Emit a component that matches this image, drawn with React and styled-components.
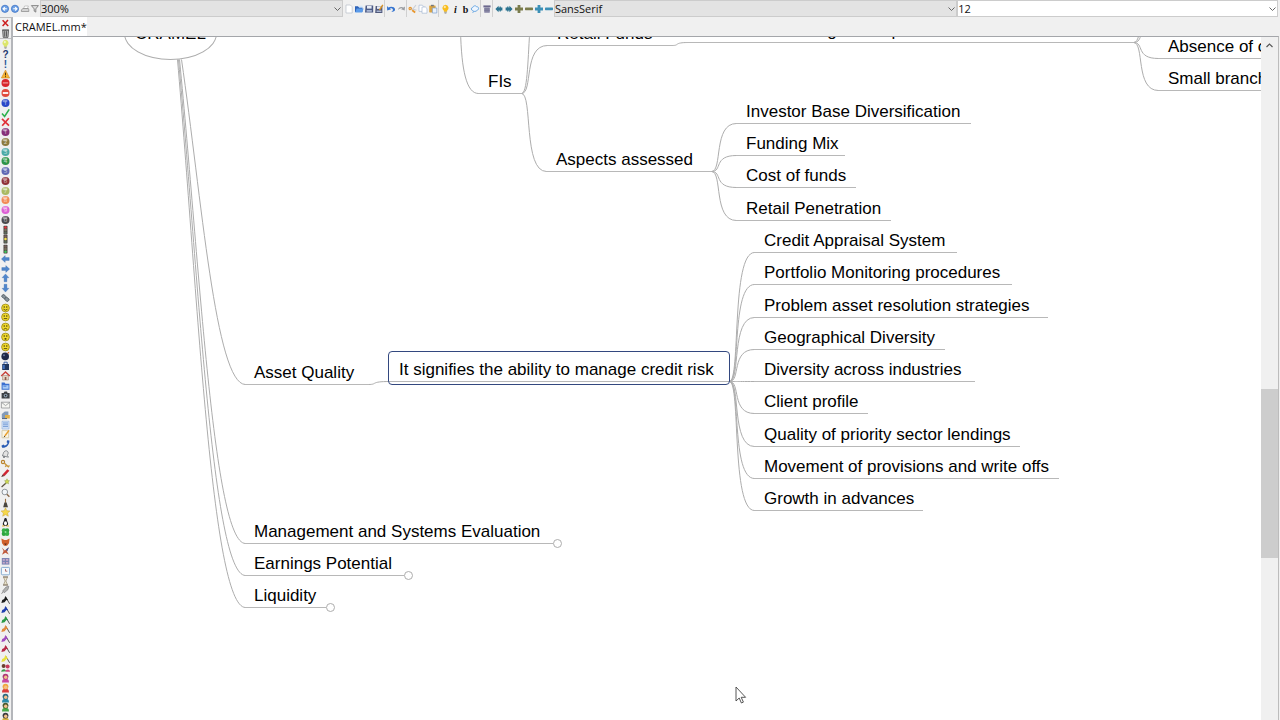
import React, { useState } from 'react';
import styled, { createGlobalStyle, css } from 'styled-components';

const GlobalStyle = createGlobalStyle`
  * {
    box-sizing: border-box;
  }

  body {
    margin: 0;
    background: #f0f0f0;
    color: #111;
    font-family: 'Open Sans', 'Noto Sans', sans-serif;
    font-size: 11px;
  }

  button,
  select {
    margin: 0;
    padding: 0;
    border: 0;
    background: none;
    color: inherit;
    font: inherit;
  }
`;

const Window = styled.div`
  display: flex;
  flex-direction: column;
  height: 100vh;
  overflow: hidden;
`;

const Toolbar = styled.header`
  display: flex;
  flex: none;
  height: 17px;
  padding-right: 2px;
`;

const ToolGroup = styled.div`
  display: flex;
  flex: none;
  align-items: center;

  & + & {
    padding-left: 1px;
    border-left: 1px solid #d0d0d0;
  }
`;

const Tools = styled.div`
  display: flex;
  flex: none;
  padding-left: ${({ $indent }) => ($indent ? '1px' : '0')};
`;

const iconSize = css`
  svg {
    display: block;
    width: 10px;
    height: 10px;
  }
`;

const ToolButton = styled.button`
  width: 10px;
  height: 10px;
  ${iconSize}
`;

const Combo = styled.label`
  position: relative;
  display: flex;
  flex: ${({ $grow }) => $grow} 1 0;
  min-width: 0;
  border: 1px solid #cccccc;
  background: ${({ $light }) => ($light ? '#ffffff' : '#e3e3e3')};

  select {
    width: 100%;
    appearance: none;
    line-height: 15px;
    outline: none;
  }

  svg {
    position: absolute;
    top: 5px;
    right: 1px;
    width: 7px;
    height: 6px;
    pointer-events: none;
  }
`;

const Body = styled.div`
  display: flex;
  flex: 1;
  min-height: 0;
`;

const IconBar = styled.aside`
  flex: none;
  width: 13px;
  overflow: hidden;
  border-top: 1px solid #c0c0c0;
  border-right: 2px solid #b4b6ba;
`;

const IconColumn = styled.div`
  display: flex;
  flex-direction: column;

  & + & {
    border-top: 1px solid #c0c0c0;
  }
`;

const IconButton = styled.button`
  flex: none;
  width: 11px;
  height: 10px;
  ${iconSize}

  &:nth-child(4n) {
    height: 9px;
  }
`;

const Main = styled.main`
  display: flex;
  flex: 1;
  flex-direction: column;
  min-width: 0;
`;

const TabStrip = styled.nav`
  display: flex;
  flex: none;
  height: 19px;
`;

const Tab = styled.button`
  padding: 0 0 0 2px;
  background: #ffffff;
  line-height: 18px;
`;

const Frame = styled.div`
  display: flex;
  flex: 1;
  min-height: 0;
  margin-right: 1px;
  border-top: 1px solid #a4a6aa;
  border-right: 1px solid #bcbcbc;
`;

const Canvas = styled.section`
  position: relative;
  flex: 1;
  overflow: hidden;
  background: #ffffff;
  color: #000;
  font-family: 'Liberation Sans', Arial, sans-serif;
  font-size: 17px;
`;

const Edges = styled.svg`
  position: absolute;
  inset: 0;
  width: 100%;
  height: 100%;
  fill: none;
  stroke: #adadad;
  stroke-width: 1;
`;

const Node = styled.div`
  position: absolute;
  left: ${({ $x }) => $x}px;
  top: ${({ $y }) => $y - 22}px;
  width: ${({ $w }) => $w}px;
  height: 23px;
  padding-left: 10px;
  border-bottom: 1px solid #b8b8b8;
  line-height: 22px;
  white-space: nowrap;
`;

const Selection = styled.div`
  position: absolute;
  left: ${({ $x }) => $x}px;
  top: ${({ $y }) => $y - 30}px;
  width: ${({ $w }) => $w}px;
  height: 34px;
  border: 1px solid #33487f;
  border-radius: 4px;
`;

const RootNode = styled.div`
  position: absolute;
  left: ${({ $x }) => $x}px;
  top: ${({ $y }) => $y}px;
  width: 93px;
  height: 53px;
  border: 1px solid #adadad;
  border-radius: 50%;
  line-height: 51px;
  text-align: center;
`;

const Pointer = styled.svg`
  position: absolute;
  left: ${({ $x }) => $x}px;
  top: ${({ $y }) => $y}px;
  width: 12px;
  height: 18px;
`;

const ScrollBar = styled.div`
  display: flex;
  flex: none;
  flex-direction: column;
  width: 17px;
  background: #f0f0f0;
`;

const ScrollButton = styled.button`
  display: flex;
  flex: none;
  align-items: center;
  justify-content: center;
  height: 17px;
`;

const Track = styled.div`
  display: flex;
  flex: 1;
  flex-direction: column;
`;

const TrackSpace = styled.div`
  flex: ${({ $grow }) => $grow};
`;

const Thumb = styled.div`
  flex: 169;
  background: #cdcdcd;
`;

/* ---------- icons, all on a 10 x 10 grid ---------- */

const Svg = ({ children }) => (
  <svg viewBox="0 0 10 10" aria-hidden="true">
    {children}
  </svg>
);

const Ball = ({ color, mark }) => (
  <Svg>
    <circle cx="5.5" cy="5" r="4" fill={color} />
    <ellipse cx="5" cy="3" rx="2.6" ry="1.4" fill="#fff" opacity="0.4" />
    <text x="5.5" y="7" fontSize="6" textAnchor="middle" fill="#fff" opacity="0.7">
      {mark}
    </text>
  </Svg>
);

const Mark = ({ color, mark, serif, italic, size = 10 }) => (
  <Svg>
    <text
      x="5.5"
      y="8.5"
      fontSize={size}
      fontWeight="700"
      fontStyle={italic ? 'italic' : 'normal'}
      fontFamily={serif ? 'Liberation Serif, serif' : 'Liberation Sans, sans-serif'}
      textAnchor="middle"
      fill={color}
    >
      {mark}
    </text>
  </Svg>
);

const Flag = ({ color }) => (
  <Svg>
    <path d="M5.800 2.200l3.800 6.600" stroke="#555" strokeWidth="1" />
    <path d="M5.400 1L8.200 5.200 6.400 5 4.600 7.200 1.400 8l.8-3L4.200 4z" fill={color} />
  </Svg>
);

const Person = ({ color, hair }) => (
  <Svg>
    <path d="M2 9.6c0-3 1.5-4 3.5-4S9 6.600 9 9.6z" fill={color} />
    <circle cx="5.5" cy="3.6" r="2.9" fill={hair} />
    <circle cx="5.7" cy="4.3" r="1.7" fill="#f2c08a" />
  </Svg>
);

const Light = ({ red, yellow, green }) => (
  <Svg>
    <rect x="3.500" y="0.800" width="4" height="8.600" rx="0.6" fill="#4a4440" />
    <circle cx="5.5" cy="2.5" r="1.3" fill={red || '#77605a'} />
    <circle cx="5.5" cy="5.1" r="1.3" fill={yellow || '#77705a'} />
    <circle cx="5.5" cy="7.7" r="1.3" fill={green || '#5a6a5a'} />
  </Svg>
);

const Arrow = ({ turn = 0, color = '#4f86cc' }) => (
  <Svg>
    <path
      d="M1.4 5l3.800-3.400v2h4v2.800h-4v2z"
      fill={color}
      stroke="#2f62a8"
      strokeWidth="0.3"
      transform={`rotate(${turn} 5.500 5)`}
    />
  </Svg>
);

const Face = ({ mouth }) => (
  <Svg>
    <circle cx="5.5" cy="5" r="3.900" fill="#f0d92c" stroke="#8a7a14" strokeWidth="0.7" />
    <circle cx="4.200" cy="4" r="0.7" fill="#3a3208" />
    <circle cx="6.800" cy="4" r="0.7" fill="#3a3208" />
    <path d={mouth} fill="none" stroke="#3a3208" strokeWidth="0.8" />
  </Svg>
);

const Disc = ({ children }) => (
  <Svg>
    <circle cx="5" cy="4.800" r="3.600" fill="#6fa2e6" stroke="#3f72c4" strokeWidth="0.8" />
    {children}
  </Svg>
);

const Bulb = ({ color }) => (
  <Svg>
    <path d="M5.500 0.800a3.200 3.200 0 0 0-1.600 5.900v1h3.200v-1A3.200 3.200 0 0 0 5.500.800z" fill={color} />
    <ellipse cx="4.800" cy="3" rx="1.100" ry="1.300" fill="#fff" opacity="0.6" />
    <path d="M4.200 8.200h2.600M4.600 9.200h1.800" stroke="#8a8a80" strokeWidth="0.8" />
  </Svg>
);

const Sign = ({ kind, color }) => (
  <Svg>
    {kind === 'plus' && <path d="M3.600 1h2.800v2.600H9v2.800H6.400V9H3.600V6.400H1V3.600h2.600z" fill={color} />}
    {kind === 'minus' && <rect x="1" y="3.600" width="8" height="2.600" rx="0.6" fill={color} />}
    {kind === 'left' && <path d="M1.400 5l3.200-3.200v1.800h1V2.600h1.200v1H8.400v2.800H6.800v1H5.600v-1h-1v1.800z" fill={color} />}
    {kind === 'right' && <path d="M8.600 5L5.400 1.800v1.800h-1V2.600H3.200v1H1.600v2.800h1.600v1h1.200v-1h1v1.800z" fill={color} />}
  </Svg>
);

const navTools = [
  ['Back', <Disc><path d="M6.800 4.800H3.200M4.800 3.100L3.100 4.800l1.700 1.700" fill="none" stroke="#fff" strokeWidth="1.100" /></Disc>],
  ['Forward', <Disc><path d="M3.200 4.800h3.600M5.200 3.100l1.700 1.700-1.700 1.700" fill="none" stroke="#fff" strokeWidth="1.100" /></Disc>],
  ['Print', <Svg><path d="M3.500 4.800L4.600 2h3.800L7.300 4.800z" fill="#fff" stroke="#999" strokeWidth="0.5" /><path d="M1.400 5.800l1.600-1.300h5.400l.4 1.300v1.700H1.400z" fill="#d4d4d4" stroke="#777" strokeWidth="0.6" /></Svg>],
  ['Filter', <Svg><path d="M1.400 1.600h7L5.800 4.900v3.200l-1.600-1V4.900z" fill="#e0e0e0" stroke="#707070" strokeWidth="0.8" /></Svg>],
];

const page = (x, y) => (
  <path d={`M${x} ${y}h3.400l1.600 1.600v4.600h-5z`} fill="#fff" stroke="#9ab0cc" strokeWidth="0.6" />
);

const editTools = [
  [
    ['New', <Svg><path d="M2 1h4.400l1.800 1.800V9H2z" fill="#fff" stroke="#b8bec8" strokeWidth="0.7" /></Svg>],
    ['Open', <Svg><path d="M1 2.200h3l.8 1h3.600V8H1z" fill="#2d62b8" /><path d="M2.600 4.600h7L8.200 8.600H1.200z" fill="#5b9bea" /><path d="M5 1.600h3.600v2H5z" fill="#d6e8fb" /></Svg>],
    ['Save', <Svg><path d="M1.600 1.600h7.600v7H1z" fill="#4c5a86" /><path d="M3 1.900h4.600v2.700H3z" fill="#e6ebf5" /><path d="M2.600 6h5.200v1.800H2.600z" fill="#a9b6d2" /></Svg>],
    ['Save as', <Svg><path d="M1.600 2h6.800v7H1.200z" fill="#51597c" /><path d="M3 2.300h4v2.600H3z" fill="#e6ebf5" /><path d="M2.600 6.500h4.800V8H2.600z" fill="#a9b6d2" /><path d="M8.800.8L5.400 6.200" stroke="#d99325" strokeWidth="1.400" /></Svg>],
  ],
  [
    ['Undo', <Svg><path d="M1 2l.2 4.400 4-1.200-1.300-.8c1.400-.4 2.600.2 3 1.200C7.200 6.600 6.400 7.400 5 7.600c2.400.6 4.400-.6 4-2.600C8.500 2.700 5 1.900 2.400 3.400z" fill="#3574d0" /></Svg>],
    ['Redo', <Svg><path d="M9 2.400l-.3 4-3.600-1.200 1.200-.7c-1.600-.6-3 .3-4.100 1.600C2 3.500 5 2.300 7.600 3.600z" fill="#9a9da2" /></Svg>],
  ],
  [
    ['Cut', <Svg><path d="M8 1L3.800 6.400M2 4.400l6.600 1.800" stroke="#c9ced6" strokeWidth="1.100" /><circle cx="2.200" cy="4.600" r="1.200" fill="none" stroke="#e8962c" strokeWidth="1.100" /><path d="M4.200 6.200l3 2.200" stroke="#e8962c" strokeWidth="1.800" /></Svg>],
    ['Copy', <Svg>{page(1, 1.2)}{page(4, 3)}</Svg>],
    ['Paste', <Svg><rect x="1.200" y="1.400" width="6.400" height="7" rx="0.6" fill="#dba544" /><rect x="3" y="0.800" width="2.800" height="1.500" fill="#777" /><path d="M4.400 4h4.400v5H4.400z" fill="#e9f1fb" stroke="#6c93c9" strokeWidth="0.6" /></Svg>],
  ],
  [
    ['Idea', <Bulb color="#f9bd1c" />],
    ['Italic', <Mark mark="i" serif italic color="#111" size={10} />],
    ['Bold', <Mark mark="b" serif color="#111" size={10} />],
    ['Cloud', <Svg><path d="M2.800 6.600C.800 6.200.800 3.600 2.700 3.500 3.200 1.500 6 1.300 6.600 2.700c2.200-.3 2.800 3 .5 3.600C6.200 7.800 3.600 7.700 2.800 6.600z" fill="#eef6ff" stroke="#5fa0e0" strokeWidth="0.9" /><path d="M3.400 7.400l-.6 1.400" stroke="#5fa0e0" /></Svg>],
  ],
  [
    ['Attributes', <Svg><path d="M1.400 1.400h7.200v2H1.400z" fill="#6c688e" /><path d="M2 3.400h6v5.400H2z" fill="#a8a6bf" /><path d="M2 5h6M2 6.800h6M4 3.400v5.400M6 3.400v5.400" stroke="#5d5a80" strokeWidth="0.600" /></Svg>],
  ],
  [
    ['Move left', <Sign kind="left" color="#2b7390" />],
    ['Move right', <Sign kind="right" color="#2b7390" />],
    ['Unfold one level', <Sign kind="plus" color="#7a7c4c" />],
    ['Fold one level', <Sign kind="minus" color="#7a7c4c" />],
    ['Unfold all', <Sign kind="plus" color="#3b8fb6" />],
    ['Fold all', <Sign kind="minus" color="#3b8fb6" />],
  ],
];

const removeIcons = [
  ['Remove last icon', <Svg><path d="M2.600 2.200l5.600 5.800M8 2L2.600 8" stroke="#cc1f1f" strokeWidth="1.500" /></Svg>],
  ['Remove all icons', <Svg><path d="M2.600 2.200h6L8 9.400H3.200z" fill="#b4b4b4" stroke="#444" strokeWidth="0.7" /><path d="M2.200 2h6.800M4.700 3.200v5.400M6.500 3.200v5.400" stroke="#444" strokeWidth="0.8" /></Svg>],
];

const numberColors = [
  '#852f78', '#8b7a3c', '#4caaa6', '#2e9446', '#6069b4', '#8f3038', '#a9ba62', '#f28a55', '#dc5fd4', '#4a4a4c',
];

const smile = 'M3.500 6.200q2 2 4 0';
const frown = 'M3.600 7.300q1.900-1.800 3.800 0';
const flat = 'M3.800 6.600h3.400';
const gasp = 'M4.800 6.600h1.400v.6H4.800z';

const flagColors = ['#1c1c1c', '#1f3fb0', '#2a9a45', '#e08a3c', '#a04cc0', '#b82a48', '#e8e03a'];

const nodeIcons = [
  ['Idea', <Bulb color="#dce66a" />],
  ['Question', <Mark mark="?" color="#22386e" size={10} />],
  ['Important', <Mark mark="!" color="#2a5a9a" size={10} />],
  ['Warning', <Svg><path d="M5.500 1L9.600 9H1.400z" fill="#f8b430" stroke="#c9852a" strokeWidth="0.6" /><path d="M5.500 3.600v2.800M5.500 7.200v1" stroke="#4a3210" strokeWidth="1" /></Svg>],
  ['Stop', <Svg><circle cx="5.500" cy="5" r="4" fill="#d8262c" /><path d="M2.800 4.900h5.400" stroke="#f0a0a0" strokeWidth="1.200" /></Svg>],
  ['No entry', <Svg><circle cx="5.500" cy="5" r="4" fill="#e04a3c" /><path d="M2.800 5h5.400" stroke="#fff" strokeWidth="1.800" /></Svg>],
  ['Info', <Ball color="#2848c8" mark="i" />],
  ['OK', <Svg><path d="M2 5.400l2.600 3L9.200 1.400" fill="none" stroke="#2cb04c" strokeWidth="1.600" /></Svg>],
  ['Not OK', <Svg><path d="M2 1.800l7 6.800M8.800 1.200L2.200 8.800" stroke="#e03038" strokeWidth="1.700" /></Svg>],
  ...numberColors.map((color, i) => [`Priority ${i}`, <Ball color={color} mark={(i + 1) % 10} />]),
  ['Red light', <Light red="#e8323a" />],
  ['Yellow light', <Light yellow="#f4e04a" />],
  ['Green light', <Light green="#3cc45a" />],
  ['Arrow left', <Arrow />],
  ['Arrow right', <Arrow turn={180} />],
  ['Arrow up', <Arrow turn={90} />],
  ['Arrow down', <Arrow turn={270} />],
  ['Attachment', <Svg><rect x="1.800" y="2" width="4" height="3" rx="1.200" fill="#88929a" stroke="#4e585e" strokeWidth="0.8" transform="rotate(35 3.800 3.500)" /><rect x="4.800" y="4.800" width="4.200" height="3.200" rx="1.200" fill="#88929a" stroke="#4e585e" strokeWidth="0.8" transform="rotate(35 7 6.400)" /></Svg>],
  ['Happy', <Face mouth={smile} />],
  ['Neutral', <Face mouth={flat} />],
  ['Sad', <Face mouth={frown} />],
  ['Angry', <Face mouth={gasp} />],
  ['Sleepy', <Face mouth={flat} />],
  ['Bomb', <Svg><circle cx="5.200" cy="5.400" r="3.800" fill="#1e2848" /><circle cx="4" cy="4.200" r="1" fill="#66749c" /><path d="M7.600 2.400l1.400-1.200" stroke="#e0602a" strokeWidth="1.200" /></Svg>],
  ['Desktop', <Svg><path d="M2.200 3h6.800v6H2.200z" fill="#20365e" /><path d="M4 3V1.200h3.200V3" fill="none" stroke="#3a62a8" strokeWidth="1" /><path d="M2.800 4h2v4h-2z" fill="#3f6fbe" /></Svg>],
  ['Home', <Svg><path d="M2.600 4.600h5.800V9H2.600z" fill="#e9d9c8" stroke="#8a6a58" strokeWidth="0.5" /><path d="M1.200 5L5.500 1l4.300 4" fill="none" stroke="#c84038" strokeWidth="1.400" /><path d="M4.700 6h1.700v3H4.700z" fill="#8c5a4a" /></Svg>],
  ['Folder', <Svg><path d="M1.600 1.600h3l.8 1.200h4V8.800H1.600z" fill="#3a6fd0" /><path d="M2.600 4.200h6v3.600h-6z" fill="#a9ccf6" /><path d="M3.400 5.200h3" stroke="#3a6fd0" strokeWidth="0.8" /></Svg>],
  ['Camera', <Svg><path d="M1.600 3h2L4.600 1.600H7L7.600 3h2v5.400h-8z" fill="#3e4246" /><circle cx="5.600" cy="5.600" r="1.900" fill="#8ea0b0" /><circle cx="5.600" cy="5.600" r="0.800" fill="#222" /></Svg>],
  ['Mail', <Svg><path d="M1.400 2.200h8.400v5.800H1.400z" fill="#f6f6f2" stroke="#85888a" strokeWidth="0.7" /><path d="M1.600 2.400l4 3.200 4-3.200" fill="none" stroke="#85888a" strokeWidth="0.7" /></Svg>],
  ['Mailbox', <Svg><path d="M1.800 4l3-2.600h3.600V8H1.800z" fill="#829ab8" /><path d="M5 5h4.800v3.600H5z" fill="#e0b04a" /><path d="M2 8.600h5" stroke="#4a5d7a" strokeWidth="1" /></Svg>],
  ['List', <Svg><path d="M2 1.200h7v7.800H2z" fill="#d5e4f8" stroke="#7da0d4" strokeWidth="0.5" /><path d="M3 3h5M3 4.800h5M3 6.600h5" stroke="#5c88cc" strokeWidth="0.8" /></Svg>],
  ['Edit', <Svg><path d="M2 1.600h6.600v7.200H2z" fill="#fbf6e6" stroke="#c8b888" strokeWidth="0.6" /><path d="M9 1.400L4.800 7" stroke="#e8a030" strokeWidth="1.500" /><path d="M4.800 7l-.8 1.200" stroke="#333" strokeWidth="0.900" /></Svg>],
  ['Phone', <Svg><path d="M9.400 1.400L7.200 1.200 6.600 3.200l1 .8C7 5.600 6 6.200 4.600 6.600L3.400 5.600 1.400 6.800l.8 2C6 9.200 9.800 5.600 9.400 1.400z" fill="#2a5cb4" /></Svg>],
  ['Bell', <Svg><path d="M2 6.600C4 5.600 2.600 3.600 4.800 2.200S9 3.200 7.800 5.200s1 2.200.6 3z" fill="#e3e3e3" stroke="#70757a" strokeWidth="0.8" /><circle cx="4" cy="8" r="1" fill="#70757a" /></Svg>],
  ['Key', <Svg><circle cx="3" cy="3" r="1.600" fill="none" stroke="#b8822c" strokeWidth="1.200" /><path d="M4.200 4l4.600 4.200M6.600 6.200L5.200 7.800M8.400 7.800l1-1.400" stroke="#c8963c" strokeWidth="1.300" /></Svg>],
  ['Pencil', <Svg><path d="M7.400 1.200l2 1.600L4.600 8 2.600 6.600z" fill="#d02432" /><path d="M2.600 6.600L4.600 8 1.200 9z" fill="#5a2a2a" /></Svg>],
  ['Wizard', <Svg><path d="M6 5L1.600 9" stroke="#5a5040" strokeWidth="1.200" /><path d="M7 .800l.7 1.700 1.800.2-1.300 1.300.4 1.800L7 5l-1.600.8.4-1.800L4.500 2.700l1.800-.2z" fill="#d0dc50" stroke="#7d8a30" strokeWidth="0.4" /></Svg>],
  ['Search', <Svg><circle cx="4.800" cy="4" r="2.800" fill="#f2f6fa" stroke="#868c92" strokeWidth="0.9" /><path d="M6.900 6.200l2.500 2.600" stroke="#8a6a4c" strokeWidth="1.400" /></Svg>],
  ['Broom', <Svg><path d="M5.500 .800v4" stroke="#9a7040" strokeWidth="1.100" /><path d="M4.400 4.600h2.200L8 9.200H3.200z" fill="#4a4640" /></Svg>],
  ['Star', <Svg><path d="M5.500.800l1.300 2.900 3.100.3-2.300 2.100.7 3.100-2.800-1.600-2.800 1.600.7-3.100L1.100 4l3.100-.3z" fill="#f6d84a" stroke="#c8a030" strokeWidth="0.5" /></Svg>],
  ['Penguin', <Svg><path d="M5.500 1C3.800 1 4.400 3.400 3.400 5S2.400 9 5.500 9s3-2.400 2.100-4S7.200 1 5.500 1z" fill="#26262a" /><ellipse cx="5.500" cy="6.300" rx="1.500" ry="2.100" fill="#fff" /><path d="M2 9h2.600M6.400 9H9" stroke="#e8b030" strokeWidth="1.200" /></Svg>],
  ['Clover', <Svg><circle cx="3.900" cy="3.500" r="2.200" fill="#35b046" /><circle cx="7.100" cy="3.500" r="2.200" fill="#2ea340" /><circle cx="3.900" cy="6.700" r="2.200" fill="#2ea340" /><circle cx="7.100" cy="6.700" r="2.200" fill="#35b046" /><circle cx="5.500" cy="5.100" r="1" fill="#8fe098" /></Svg>],
  ['Butterfly', <Svg><path d="M1.400 1.600l3 1.400h2.200l3-1.400L9 6.200 7 8.800H4L2 6.200z" fill="#d0602c" /><path d="M4.200 6.400h2.600L5.500 8.400z" fill="#5a2a1a" /></Svg>],
  ['Rocket', <Svg><path d="M1.800 1.600l3 2.800 4-3.200L7 5.600l1.800 3-3.400-1.800L2 8.800 3.600 5z" fill="#c05a3c" /><path d="M6 3.400L9 1.200 7.200 5.200z" fill="#3c5ea8" /></Svg>],
  ['Group of pictures', <Svg><path d="M1.800 2h7.600v6.600H1.800z" fill="#7c84b4" /><path d="M2.800 3h2v1.800h-2zM6 3h2.200v1.800H6zM2.800 6h2v1.600h-2zM6 6h2.200v1.600H6z" fill="#c9a8c8" /></Svg>],
  ['Calendar', <Svg><rect x="1.400" y="1.400" width="8.200" height="7.400" rx="1" fill="#f4f8fc" stroke="#6f9cc8" strokeWidth="0.800" /><path d="M5.500 3v2.200h1.800" fill="none" stroke="#a05050" strokeWidth="0.800" /></Svg>],
  ['Hourglass', <Svg><path d="M3 1h5M3 9h5" stroke="#6a5a48" strokeWidth="1" /><path d="M3.600 1.400h3.800L5.900 5l1.500 3.600H3.600L5.100 5z" fill="#e9e3cc" stroke="#8a7c64" strokeWidth="0.600" /></Svg>],
  ['Launch', <Svg><path d="M8.800 1.200L6 2 2.600 6l1.600 1.800L8 4.600z" fill="#b0b0ae" stroke="#75767a" strokeWidth="0.600" /><path d="M3 6.600L1.600 8.800" stroke="#888" strokeWidth="0.900" /></Svg>],
  ...flagColors.map((color, i) => [`Flag ${i + 1}`, <Flag color={color} />]),
  ['Family', <Svg><circle cx="3.600" cy="3" r="2" fill="#6a4030" /><circle cx="7.600" cy="3.400" r="2" fill="#c83a5c" /><path d="M1.200 8.800c0-3 4.400-3.400 4.800-.6z" fill="#3a9a48" /><path d="M5.400 8.800c.2-3.200 4.400-3.200 4.600 0z" fill="#d24484" /></Svg>],
  ['Girl', <Person color="#c848a0" hair="#b03878" />],
  ['Woman', <Person color="#d83c3c" hair="#f0a83c" />],
  ['Man', <Person color="#2a8aa8" hair="#2c6a80" />],
  ['Boy', <Person color="#48a848" hair="#4a5a30" />],
  ['Group', <Person color="#d8b040" hair="#3a3a3e" />],
];

/* ---------- mind map ---------- */

// Map coordinates of the top left corner of the visible part
const VIEW = { x: 13, y: 37 };

const nodes = [
  { x: 478, y: 93, w: 43, text: 'FIs' },
  { x: 547, y: 45, w: 126, text: 'Retail Funds' },
  { x: 685, y: 42, w: 449, text: 'NBFCs are lacking in comparison with banks' },
  { x: 1158, y: 58, w: 200, text: 'Absence of cheap funds' },
  { x: 1158, y: 90, w: 200, text: 'Small branch network' },
  { x: 546, y: 171, w: 165, text: 'Aspects assessed' },
  { x: 736, y: 123, w: 235, text: 'Investor Base Diversification' },
  { x: 736, y: 155, w: 109, text: 'Funding Mix' },
  { x: 736, y: 187, w: 120, text: 'Cost of funds' },
  { x: 736, y: 220, w: 155, text: 'Retail Penetration' },
  { x: 244, y: 384, w: 125, text: 'Asset Quality' },
  { x: 389, y: 381, w: 340, text: 'It signifies the ability to manage credit risk', selected: true },
  { x: 754, y: 252, w: 203, text: 'Credit Appraisal System' },
  { x: 754, y: 284, w: 258, text: 'Portfolio Monitoring procedures' },
  { x: 754, y: 317, w: 294, text: 'Problem asset resolution strategies' },
  { x: 754, y: 349, w: 191, text: 'Geographical Diversity' },
  { x: 754, y: 381, w: 221, text: 'Diversity across industries' },
  { x: 754, y: 413, w: 114, text: 'Client profile' },
  { x: 754, y: 446, w: 266, text: 'Quality of priority sector lendings' },
  { x: 754, y: 478, w: 305, text: 'Movement of provisions and write offs' },
  { x: 754, y: 510, w: 169, text: 'Growth in advances' },
  { x: 244, y: 543, w: 309, text: 'Management and Systems Evaluation', folded: true },
  { x: 244, y: 575, w: 160, text: 'Earnings Potential', folded: true },
  { x: 244, y: 607, w: 82, text: 'Liquidity', folded: true },
];

// [parent x, parent y, child x, child y]
const links = [
  [521, 93, 547, -30],
  [521, 93, 547, 45],
  [521, 93, 546, 171],
  [672, 45, 688, 42],
  [1133, 42, 1158, 26],
  [1133, 42, 1158, -6],
  [1133, 42, 1158, 58],
  [1133, 42, 1158, 90],
  ...[123, 155, 187, 220].map((y) => [711, 171, 736, y]),
  [368, 384, 389, 381],
  ...[252, 284, 317, 349, 381, 413, 446, 478, 510].map((y) => [729, 381, 754, y]),
];

const rootLinks = [
  [181, 384],
  [179, 543],
  [178, 575],
  [177, 607],
];

const linkPath = ([x1, y1, x2, y2]) => {
  const d = x2 - x1;
  return `M${x1} ${y1}C${x1 + d * 0.45} ${y1} ${x1 + d * 0.06} ${y2} ${x2} ${y2}`;
};

const rootPath = ([x, y]) => {
  const h = y - 59;
  return `M${x} 59C${x + 20} ${59 + h * 0.42} ${x + 34} ${y} 245 ${y}`;
};

const MindMap = () => (
  <Canvas>
    <Edges aria-hidden="true">
      <g transform={`translate(${0.5 - VIEW.x} ${0.5 - VIEW.y})`}>
        <path d="M460 30C461 70 466 93 478 93" />
        {links.map((link) => (
          <path key={link.join()} d={linkPath(link)} />
        ))}
        {rootLinks.map((link) => (
          <path key={link.join()} d={rootPath(link)} />
        ))}
        {nodes
          .filter((node) => node.folded)
          .map(({ x, y, w }) => (
            <circle key={y} cx={x + w + 4} cy={y} r="4" />
          ))}
      </g>
    </Edges>
    <RootNode $x={124 - VIEW.x} $y={7 - VIEW.y}>
      CRAMEL
    </RootNode>
    {nodes.map(({ x, y, w, text, selected }) => (
      <React.Fragment key={text}>
        <Node $x={x - VIEW.x} $y={y - VIEW.y} $w={w}>
          {text}
        </Node>
        {selected && <Selection $x={x - 1 - VIEW.x} $y={y - VIEW.y} $w={w + 2} />}
      </React.Fragment>
    ))}
    <Pointer $x={735 - VIEW.x} $y={686 - VIEW.y} viewBox="0 0 12 18" aria-hidden="true">
      <path
        d="M1 1v14l3.200-3 2.200 5 2-.9-2.200-4.800h4.400z"
        fill="#fff"
        stroke="#444"
        strokeWidth="0.9"
      />
    </Pointer>
  </Canvas>
);

const Select = ({ label, options, grow, light }) => {
  const [value, setValue] = useState(options[0]);

  return (
    <Combo $grow={grow} $light={light}>
      <select aria-label={label} value={value} onChange={(e) => setValue(e.target.value)}>
        {options.map((option) => (
          <option key={option}>{option}</option>
        ))}
      </select>
      <svg viewBox="0 0 7 6" aria-hidden="true">
        <path d="M0.500 1.500l3 3 3-3" fill="none" stroke="#666" />
      </svg>
    </Combo>
  );
};

const renderTools = (tools) =>
  tools.map(([label, icon]) => (
    <ToolButton key={label} type="button" aria-label={label}>
      {icon}
    </ToolButton>
  ));

const renderIcons = (icons) =>
  icons.map(([label, icon]) => (
    <IconButton key={label} type="button" aria-label={label}>
      {icon}
    </IconButton>
  ));

const App = () => (
  <>
    <GlobalStyle />
    <Window>
      <Toolbar>
        <Tools>
          <ToolGroup>{renderTools(navTools)}</ToolGroup>
        </Tools>
        <Select label="Zoom" options={['300%', '200%', '100%']} grow={303} />
        <Tools $indent>
          {editTools.map((group) => (
            <ToolGroup key={group[0][0]}>{renderTools(group)}</ToolGroup>
          ))}
        </Tools>
        <Select label="Font" options={['SansSerif', 'Serif', 'Monospaced']} grow={404} />
        <Select label="Font size" options={['12', '14', '16']} grow={321} light />
      </Toolbar>
      <Body>
        <IconBar>
          <IconColumn>{renderIcons(removeIcons)}</IconColumn>
          <IconColumn>{renderIcons(nodeIcons)}</IconColumn>
        </IconBar>
        <Main>
          <TabStrip>
            <Tab type="button">CRAMEL.mm*</Tab>
          </TabStrip>
          <Frame>
            <MindMap />
            <ScrollBar>
              <ScrollButton type="button" aria-label="Scroll up">
                <svg width="7" height="5" viewBox="0 0 7 5" aria-hidden="true">
                  <path d="M0.500 4l3-3 3 3" fill="none" stroke="#555" strokeWidth="1.200" />
                </svg>
              </ScrollButton>
              <Track>
                <TrackSpace $grow={335} />
                <Thumb />
                <TrackSpace $grow={162} />
              </Track>
            </ScrollBar>
          </Frame>
        </Main>
      </Body>
    </Window>
  </>
);

export default App;
